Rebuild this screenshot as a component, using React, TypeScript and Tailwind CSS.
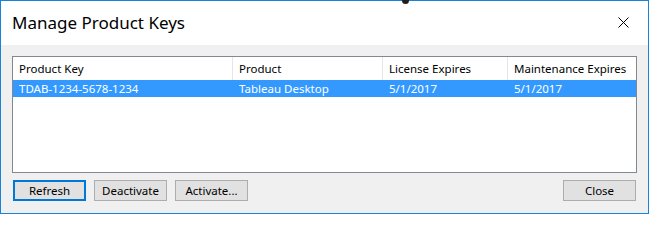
import React from 'react';

interface KeyRow {
  key: string;
  product: string;
  license: string;
  maintenance: string;
}

const rows: KeyRow[] = [
  { key: 'TDAB-1234-5678-1234', product: 'Tableau Desktop', license: '5/1/2017', maintenance: '5/1/2017' },
];

const font = { fontFamily: '"Segoe UI", "Noto Sans", sans-serif' };

function Btn({ label, focused }: { label: string; focused?: boolean }) {
  return (
    <button
      className={
        focused
          ? 'h-[21px] w-[73px] border-2 border-[#0078d7] bg-[#e1e1e1] text-[11.5px] text-black leading-none'
          : 'h-[21px] w-[73px] border border-[#adadad] bg-[#e1e1e1] text-[11.5px] text-black leading-none'
      }
    >
      {label}
    </button>
  );
}

export default function App() {
  return (
    <div className="relative w-[649px] h-[214px] border border-[#1883d7] bg-[#f0f0f0] flex flex-col" style={font}>
      <div className="absolute left-[401px] -top-[4px] w-[7px] h-[7px] rounded-full bg-[#1f1f1f]" />
      <div className="h-[44px] bg-white flex items-center justify-between pl-[11px] pr-[19px]">
        <span className="text-[17px] text-black pb-[1px]">Manage Product Keys</span>
        <svg width="11" height="11" viewBox="0 0 11 11" className="mb-[1px]">
          <path d="M0.5 0.5 L10.5 10.5 M10.5 0.5 L0.5 10.5" stroke="#000" strokeWidth="1" fill="none" />
        </svg>
      </div>
      <div className="flex-1 flex flex-col px-[11px] pt-[11px] pb-[12px]">
        <div className="h-[117px] border border-[#828790] bg-white flex flex-col text-[11.5px]">
          <div className="h-[23px] grid grid-cols-[220px_150px_125px_1fr] text-black">
            <div className="border-r border-[#e5e5e5] flex items-center pl-[6px]">Product Key</div>
            <div className="border-r border-[#e5e5e5] flex items-center pl-[6px]">Product</div>
            <div className="border-r border-[#e5e5e5] flex items-center pl-[6px]">License Expires</div>
            <div className="flex items-center pl-[6px]">Maintenance Expires</div>
          </div>
          {rows.map((r, i) => (
            <div key={i} className="h-[17px] grid grid-cols-[220px_150px_125px_1fr] bg-[#3399ff] text-white">
              <div className="flex items-center pl-[6px]">{r.key}</div>
              <div className="flex items-center pl-[6px]">{r.product}</div>
              <div className="flex items-center pl-[6px]">{r.license}</div>
              <div className="flex items-center pl-[6px]">{r.maintenance}</div>
            </div>
          ))}
        </div>
        <div className="mt-[7px] flex items-center gap-[8px] pl-[1px] pr-[1px]">
          <Btn label="Refresh" focused />
          <Btn label="Deactivate" />
          <Btn label="Activate..." />
          <div className="flex-1" />
          <Btn label="Close" />
        </div>
      </div>
    </div>
  );
}
